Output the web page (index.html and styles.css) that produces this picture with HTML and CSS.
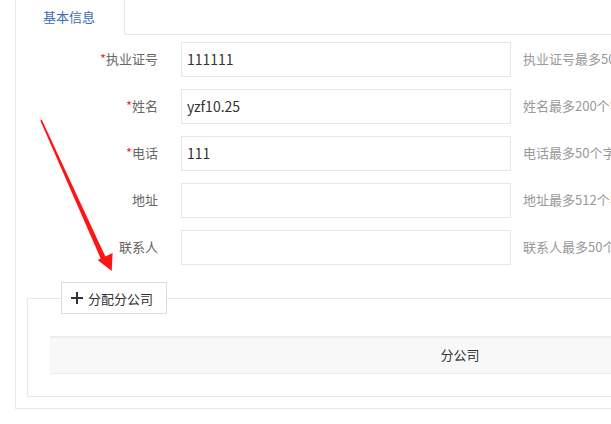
FILE: index.html
```html
<!DOCTYPE html>
<html lang="zh">
<head>
<meta charset="utf-8">
<link rel="stylesheet" href="styles.css">
</head>
<body>
<div class="page">
  <div class="tabs">
    <div class="tab active">基本信息</div>
    <div class="tab-rest"></div>
  </div>
  <div class="panel">
    <div class="form">
      <div class="row">
        <label class="label"><span class="req">*</span>执业证号</label>
        <div class="input">111111</div>
        <span class="hint">执业证号最多50个字符</span>
      </div>
      <div class="row">
        <label class="label"><span class="req">*</span>姓名</label>
        <div class="input">yzf10.25</div>
        <span class="hint">姓名最多200个字符</span>
      </div>
      <div class="row">
        <label class="label"><span class="req">*</span>电话</label>
        <div class="input">111</div>
        <span class="hint">电话最多50个字符</span>
      </div>
      <div class="row">
        <label class="label">地址</label>
        <div class="input"></div>
        <span class="hint">地址最多512个字符</span>
      </div>
      <div class="row">
        <label class="label">联系人</label>
        <div class="input"></div>
        <span class="hint">联系人最多50个字符</span>
      </div>
    </div>
    <fieldset class="group">
      <legend class="legend">
        <button class="btn" type="button">
          <svg class="plus" width="12" height="12" viewBox="0 0 12 12"><path d="M6 0V12M0 6H12" stroke="#333" stroke-width="2" fill="none"/></svg>
          <span>分配分公司</span>
        </button>
      </legend>
      <div class="table">
        <div class="th">分公司</div>
      </div>
    </fieldset>
  </div>
  <svg class="arrow" width="611" height="424" viewBox="0 0 611 424">
    <polygon fill="#ff1414" points="41.7,119.6 40.3,120.4 101.5,260.5 106.3,258.5"/>
    <polygon fill="#ff1414" points="112.6,253.1 97.6,259.9 111.7,271"/>
  </svg>
</div>
</body>
</html>
```
FILE: styles.css
```css
* { box-sizing: border-box; }
html, body { margin: 0; padding: 0; background: #fff; overflow: hidden; }
body {
  font-family: "Noto Sans CJK SC", "Open Sans", sans-serif;
  font-size: 13px;
  color: #333;
}
.page { position: relative; width: 611px; height: 424px; }
.tabs {
  display: flex;
  margin-left: 15px;
  height: 35px;
}
.tab {
  width: 110px;
  height: 35px;
  border-left: 1px solid #e8e8e8;
  border-right: 1px solid #e8e8e8;
  background: #fff;
  color: #3a6cb5;
  line-height: 34px;
  text-align: center;
  padding-right: 2px;
}
.tab-rest {
  flex: 1;
  border-bottom: 1px solid #e8e8e8;
}
.panel {
  margin-left: 15px;
  width: 900px;
  height: 374px;
  border-left: 1px solid #e8e8e8;
  border-bottom: 1px solid #e8e8e8;
  padding: 7px 0 0 11px;
}
.form {
  display: flex;
  flex-direction: column;
  gap: 12px;
}
.row {
  display: flex;
  align-items: center;
  height: 35px;
}
.label {
  width: 131px;
  text-align: right;
  color: #666;
  padding-bottom: 3px;
}
.req { color: #f03333; }
.input {
  margin-left: 23px;
  width: 330px;
  height: 35px;
  border: 1px solid #e6e6e6;
  padding: 0 5px;
  line-height: 32px;
  font-size: 14px;
  color: #333;
}
.hint {
  margin-left: 12px;
  color: #999;
  white-space: nowrap;
  padding-bottom: 2px;
}
.group {
  margin: 17px 0 0 0;
  width: 880px;
  border: 1px solid #e8e8e8;
  padding: 0 22px 22px 22px;
  min-width: 0;
}
.legend {
  padding: 0;
  margin-left: 11px;
}
.btn {
  display: flex;
  align-items: center;
  gap: 5px;
  height: 32px;
  width: 106px;
  padding: 0 0 0 9px;
  border: 1px solid #dcdcdc;
  background: #fff;
  font-family: inherit;
  font-size: 13px;
  color: #333;
}
.table {
  margin-top: 22px;
  width: 820px;
}
.th {
  height: 38px;
  border-top: 2px solid #ececec;
  border-bottom: 1px solid #ececec;
  background: #f8f8f8;
  text-align: center;
  line-height: 33px;
  color: #333;
}
.arrow {
  position: absolute;
  left: 0;
  top: 0;
  pointer-events: none;
}
```
